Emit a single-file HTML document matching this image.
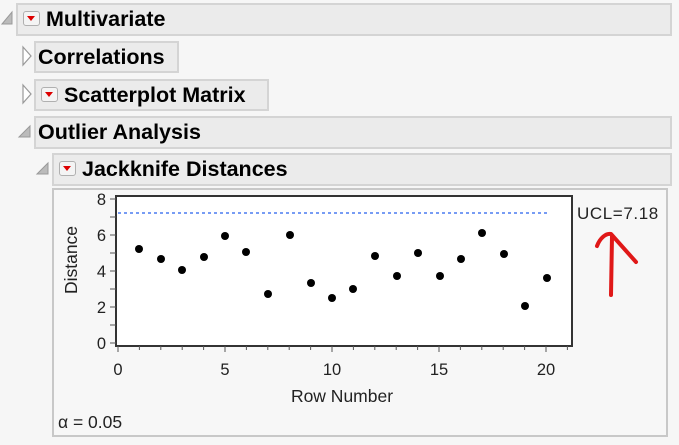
<!DOCTYPE html>
<html><head><style>
body{margin:0;width:679px;height:445px;background:#f6f6f6;position:relative;overflow:hidden;font-family:"Liberation Sans",sans-serif}
.bar{position:absolute;background:#ebebeb;border:2px solid #d4d4d4;box-sizing:border-box;font-weight:bold;font-size:21.5px;color:#000;line-height:28px;white-space:nowrap}
.dd{position:absolute;width:17px;height:15px;border:1px solid #b0b0b0;border-radius:3px;background:#f4f4f4;box-sizing:border-box}
.dd:after{content:"";position:absolute;left:3px;top:4px;border-left:4.5px solid transparent;border-right:4.5px solid transparent;border-top:5px solid #d00}
</style></head><body>
<svg style="position:absolute;left:0;top:0" width="679" height="445">
<polygon points="12,12 12,24 2,24" fill="#bbb" stroke="#999" stroke-width="1"/>
<polygon points="23,47 31,56 23,65" fill="#fff" stroke="#999" stroke-width="1.2"/>
<polygon points="23,85 31,94 23,103" fill="#fff" stroke="#999" stroke-width="1.2"/>
<polygon points="30,126 30,137 19,137" fill="#bbb" stroke="#999" stroke-width="1"/>
<polygon points="48,163 48,174 37,174" fill="#bbb" stroke="#999" stroke-width="1"/>
</svg>
<div class="bar" style="left:16px;top:3px;width:656px;height:33px;padding-left:28px">Multivariate</div>
<div class="dd" style="left:23px;top:11px"></div>
<div class="bar" style="left:34px;top:41px;width:145px;height:32px;padding-left:2px">Correlations</div>
<div class="bar" style="left:34px;top:79px;width:235px;height:32px;padding-left:28px">Scatterplot Matrix</div>
<div class="dd" style="left:41px;top:87px"></div>
<div class="bar" style="left:34px;top:116px;width:638px;height:33px;padding-left:2px">Outlier Analysis</div>
<div class="bar" style="left:52px;top:153px;width:620px;height:33px;padding-left:28px">Jackknife Distances</div>
<div class="dd" style="left:59px;top:161px"></div>
<div style="position:absolute;left:52px;top:188px;width:616px;height:249px;border:2px solid #c8c8c8;box-sizing:border-box;background:#f7f7f7"></div>
<svg style="position:absolute;left:0;top:0" width="679" height="445" font-family="Liberation Sans, sans-serif">
<rect x="116" y="196" width="456" height="150" fill="#fff" stroke="#333" stroke-width="2"/>
<line x1="118" y1="213" x2="548" y2="213" stroke="#4a7cf0" stroke-width="1.5" stroke-dasharray="3,3"/>
<g stroke="#555" stroke-width="1">
<line x1="110" y1="199" x2="116" y2="199"/><line x1="110" y1="217" x2="116" y2="217"/><line x1="110" y1="235" x2="116" y2="235"/><line x1="110" y1="253" x2="116" y2="253"/><line x1="110" y1="271" x2="116" y2="271"/><line x1="110" y1="289" x2="116" y2="289"/><line x1="110" y1="307" x2="116" y2="307"/><line x1="110" y1="325" x2="116" y2="325"/><line x1="110" y1="343" x2="116" y2="343"/>
<line x1="118" y1="346" x2="118" y2="352"/><line x1="139.4" y1="346" x2="139.4" y2="350"/><line x1="160.8" y1="346" x2="160.8" y2="350"/><line x1="182.2" y1="346" x2="182.2" y2="350"/><line x1="203.6" y1="346" x2="203.6" y2="350"/><line x1="225" y1="346" x2="225" y2="352"/><line x1="246.4" y1="346" x2="246.4" y2="350"/><line x1="267.8" y1="346" x2="267.8" y2="350"/><line x1="289.2" y1="346" x2="289.2" y2="350"/><line x1="310.6" y1="346" x2="310.6" y2="350"/><line x1="332" y1="346" x2="332" y2="352"/><line x1="353.4" y1="346" x2="353.4" y2="350"/><line x1="374.8" y1="346" x2="374.8" y2="350"/><line x1="396.2" y1="346" x2="396.2" y2="350"/><line x1="417.6" y1="346" x2="417.6" y2="350"/><line x1="439" y1="346" x2="439" y2="352"/><line x1="460.4" y1="346" x2="460.4" y2="350"/><line x1="481.8" y1="346" x2="481.8" y2="350"/><line x1="503.2" y1="346" x2="503.2" y2="350"/><line x1="524.6" y1="346" x2="524.6" y2="350"/><line x1="546" y1="346" x2="546" y2="352"/><line x1="567.4" y1="346" x2="567.4" y2="350"/>
</g>
<g fill="#222" font-size="16.5" text-anchor="end">
<text x="106" y="205">8</text><text x="106" y="241">6</text><text x="106" y="277">4</text><text x="106" y="313">2</text><text x="106" y="349">0</text>
</g>
<g fill="#222" font-size="16.5" text-anchor="middle">
<text x="118" y="375">0</text><text x="225" y="375">5</text><text x="332" y="375">10</text><text x="439" y="375">15</text><text x="546" y="375">20</text>
<text x="342" y="402" font-size="17.5">Row Number</text>
<text transform="translate(77,260) rotate(-90)" font-size="17.5">Distance</text>
</g>
<text x="577" y="219" font-size="17" letter-spacing="0.6" fill="#222">UCL=7.18</text>
<text x="58" y="428" font-size="17.5" fill="#222">α = 0.05</text>
<g fill="#000">
<circle cx="139" cy="249" r="4"/><circle cx="161" cy="259" r="4"/><circle cx="182" cy="270" r="4"/><circle cx="204" cy="257" r="4"/><circle cx="225" cy="236" r="4"/><circle cx="246" cy="252" r="4"/><circle cx="268" cy="294" r="4"/><circle cx="290" cy="235" r="4"/><circle cx="311" cy="283" r="4"/><circle cx="332" cy="298" r="4"/><circle cx="353" cy="289" r="4"/><circle cx="375" cy="256" r="4"/><circle cx="397" cy="276" r="4"/><circle cx="418" cy="253" r="4"/><circle cx="440" cy="276" r="4"/><circle cx="461" cy="259" r="4"/><circle cx="482" cy="233" r="4"/><circle cx="504" cy="254" r="4"/><circle cx="525" cy="306" r="4"/><circle cx="547" cy="278" r="4"/>
</g>
<path d="M611,295 L612,236 M597,246 C600,238 606,233 611,234 L636,262" stroke="#e01818" stroke-width="4" fill="none" stroke-linecap="round" stroke-linejoin="round"/>
</svg>
</body></html>
